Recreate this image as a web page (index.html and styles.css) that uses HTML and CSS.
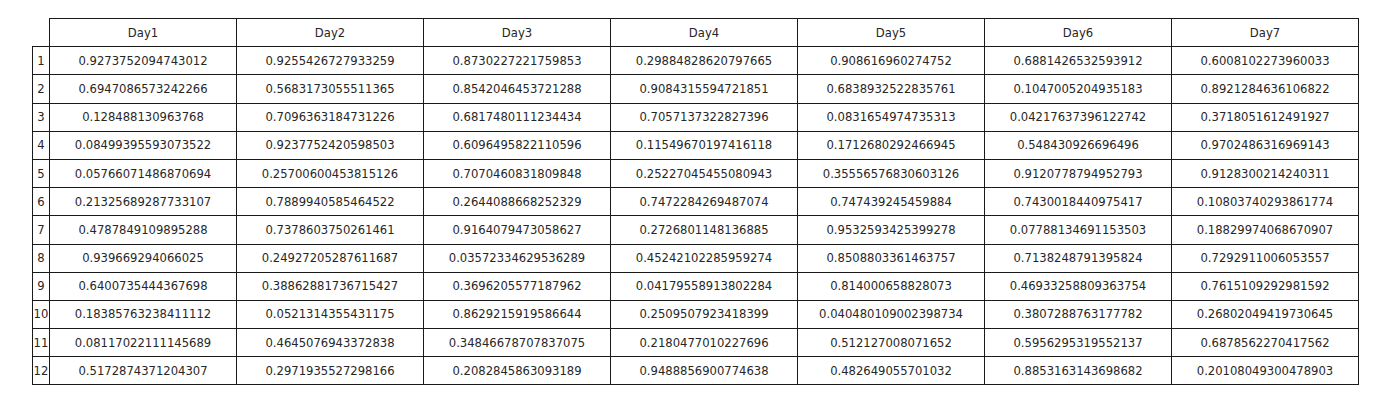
FILE: index.html
```html
<!DOCTYPE html>
<html>
<head>
<meta charset="utf-8">
<link rel="stylesheet" href="styles.css">
</head>
<body>
<div class="wrap">
<table class="grid">
<colgroup><col class="c-label"><col class="c-day"><col class="c-day"><col class="c-day"><col class="c-day"><col class="c-day"><col class="c-day"><col class="c-day"></colgroup>
<thead>
<tr class="head"><th class="corner"></th><th>Day1</th><th>Day2</th><th>Day3</th><th>Day4</th><th>Day5</th><th>Day6</th><th>Day7</th></tr>
</thead>
<tbody>
<tr><th class="lbl">1</th><td>0.9273752094743012</td><td>0.9255426727933259</td><td>0.8730227221759853</td><td>0.29884828620797665</td><td>0.908616960274752</td><td>0.6881426532593912</td><td>0.6008102273960033</td></tr>
<tr><th class="lbl">2</th><td>0.6947086573242266</td><td>0.5683173055511365</td><td>0.8542046453721288</td><td>0.9084315594721851</td><td>0.6838932522835761</td><td>0.1047005204935183</td><td>0.8921284636106822</td></tr>
<tr><th class="lbl">3</th><td>0.128488130963768</td><td>0.7096363184731226</td><td>0.6817480111234434</td><td>0.7057137322827396</td><td>0.0831654974735313</td><td>0.04217637396122742</td><td>0.3718051612491927</td></tr>
<tr><th class="lbl">4</th><td>0.08499395593073522</td><td>0.9237752420598503</td><td>0.6096495822110596</td><td>0.11549670197416118</td><td>0.1712680292466945</td><td>0.548430926696496</td><td>0.9702486316969143</td></tr>
<tr><th class="lbl">5</th><td>0.05766071486870694</td><td>0.25700600453815126</td><td>0.7070460831809848</td><td>0.25227045455080943</td><td>0.35556576830603126</td><td>0.9120778794952793</td><td>0.9128300214240311</td></tr>
<tr><th class="lbl">6</th><td>0.21325689287733107</td><td>0.7889940585464522</td><td>0.2644088668252329</td><td>0.7472284269487074</td><td>0.747439245459884</td><td>0.7430018440975417</td><td>0.10803740293861774</td></tr>
<tr><th class="lbl">7</th><td>0.4787849109895288</td><td>0.7378603750261461</td><td>0.9164079473058627</td><td>0.2726801148136885</td><td>0.9532593425399278</td><td>0.07788134691153503</td><td>0.18829974068670907</td></tr>
<tr><th class="lbl">8</th><td>0.939669294066025</td><td>0.24927205287611687</td><td>0.03572334629536289</td><td>0.45242102285959274</td><td>0.8508803361463757</td><td>0.7138248791395824</td><td>0.7292911006053557</td></tr>
<tr><th class="lbl">9</th><td>0.6400735444367698</td><td>0.38862881736715427</td><td>0.3696205577187962</td><td>0.04179558913802284</td><td>0.814000658828073</td><td>0.46933258809363754</td><td>0.7615109292981592</td></tr>
<tr><th class="lbl">10</th><td>0.18385763238411112</td><td>0.0521314355431175</td><td>0.8629215919586644</td><td>0.2509507923418399</td><td>0.040480109002398734</td><td>0.3807288763177782</td><td>0.26802049419730645</td></tr>
<tr><th class="lbl">11</th><td>0.08117022111145689</td><td>0.4645076943372838</td><td>0.34846678707837075</td><td>0.2180477010227696</td><td>0.512127008071652</td><td>0.5956295319552137</td><td>0.6878562270417562</td></tr>
<tr><th class="lbl">12</th><td>0.5172874371204307</td><td>0.2971935527298166</td><td>0.2082845863093189</td><td>0.9488856900774638</td><td>0.482649055701032</td><td>0.8853163143698682</td><td>0.20108049300478903</td></tr>
</tbody>
</table>
</div>
</body>
</html>
```
FILE: styles.css
```css
html, body {
  margin: 0;
  padding: 0;
  background: #ffffff;
}
.wrap {
  padding: 18px 0 0 32px;
}
.grid {
  border-collapse: collapse;
  table-layout: fixed;
  width: 1326px;
  font-family: "DejaVu Sans", sans-serif;
  font-size: 11.6px;
  color: #262626;
}
.c-label { width: 17px; }
.c-day { width: 187px; }
.grid th, .grid td {
  border: 1px solid #1a1a1a;
  font-weight: normal;
  text-align: center;
  padding: 0;
  height: 27.2px;
  white-space: nowrap;
  overflow: visible;
}
.grid .corner {
  border: none;
}
.grid .lbl {
  text-align: center;
}
```
